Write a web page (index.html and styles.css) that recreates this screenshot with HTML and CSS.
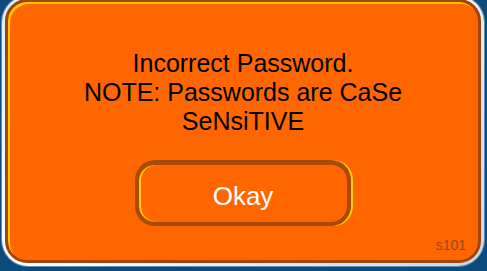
FILE: index.html
```html
<!DOCTYPE html>
<html>
<head>
<meta charset="utf-8">
<link rel="stylesheet" href="styles.css">
</head>
<body>
<div class="frame">
  <div class="panel">
    <p class="message">Incorrect Password.<br>NOTE: Passwords are CaSe<br>SeNsiTIVE</p>
    <button class="okay">Okay</button>
    <div class="footer"><span class="code">s101</span></div>
  </div>
</div>
</body>
</html>
```
FILE: styles.css
```css
html, body {
  margin: 0;
  padding: 0;
}
body {
  width: 487px;
  height: 271px;
  overflow: hidden;
  background: #0b4a7a;
  font-family: "Liberation Sans", Arial, sans-serif;
}
.frame {
  box-sizing: border-box;
  margin: -4px 3px 0 2px;
  height: 270px;
  padding: 3px;
  border-radius: 26px;
  background: linear-gradient(135deg, #dfeaf4, #ffffff 40%, #c9d8e6);
  box-shadow: 0 0 0 1px #5f8cb4;
}
.panel {
  box-sizing: border-box;
  height: 100%;
  border: 3px solid #a3440c;
  border-radius: 22px;
  background: #ff6600;
  box-shadow: inset 2px 2px 0 #ffcc00;
  display: flex;
  flex-direction: column;
  align-items: center;
  padding: 47px 12px 6px 12px;
}
.message {
  margin: 0;
  font-size: 25px;
  line-height: 29px;
  text-align: center;
  color: #000;
}
.okay {
  box-sizing: border-box;
  margin-top: 24px;
  width: 216px;
  height: 66px;
  border: 4px solid #a84a08;
  border-top-width: 5px;
  border-radius: 20px;
  background: #ff6600;
  box-shadow: inset 2px 0 0 #ffcc00, 2px 0 0 #ffcc00;
  color: #fff;
  font-family: "Liberation Sans", Arial, sans-serif;
  font-size: 26px;
  padding: 6px 0 0 0;
}
.footer {
  margin-top: auto;
  align-self: stretch;
  text-align: right;
}
.code {
  font-size: 14px;
  line-height: 16px;
  color: #964a26;
}
```
